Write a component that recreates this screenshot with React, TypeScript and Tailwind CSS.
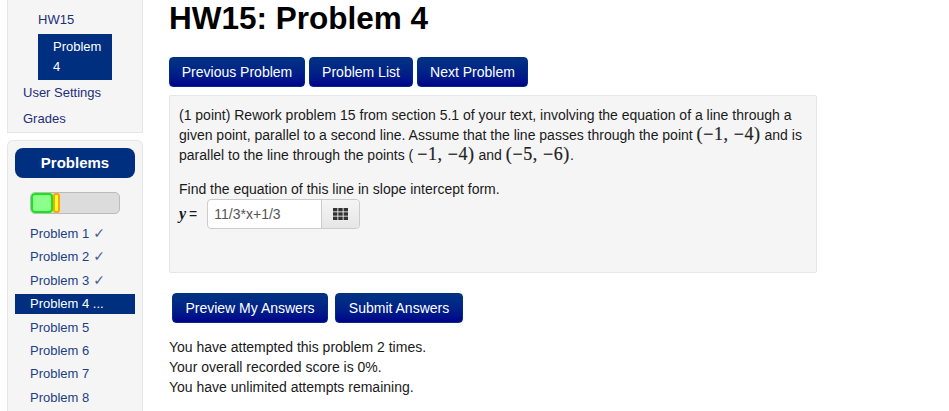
import React from "react";

const sans = "font-['Liberation_Sans',Arial,sans-serif]";

function NavButton({ width, children }: { width: string; children: React.ReactNode }) {
  return (
    <a className={`flex h-[30px] items-center justify-center rounded-[4px] border border-[#002f7f] bg-gradient-to-b from-[#003383] to-[#00008b] text-[14px] text-white ${width}`}>
      {children}
    </a>
  );
}

function Math({ children }: { children: React.ReactNode }) {
  return (
    <span className="font-['Liberation_Serif',serif] text-[18px] leading-[0] tracking-[0.6px] text-[#222] [-webkit-text-stroke:0.2px_#222]">
      {children}
    </span>
  );
}

const problems = [
  { label: "Problem 1", done: true },
  { label: "Problem 2", done: true },
  { label: "Problem 3", done: true },
  { label: "Problem 4 ...", active: true },
  { label: "Problem 5" },
  { label: "Problem 6" },
  { label: "Problem 7" },
  { label: "Problem 8" },
];

export default function App() {
  return (
    <div className={`flex h-[411px] w-[949px] overflow-hidden bg-white text-[14px] leading-[20px] text-[#1a1a1a] ${sans}`}>
      <aside className="ml-[7px] w-[136px] shrink-0">
        <div className="h-[133px] border-x border-b border-[#e6e6e6] bg-[#f5f5f5] pt-[10px] text-[#1c2f78]">
          <div className="pl-[30px] text-[13px] leading-[20px]">HW15</div>
          <div className="mt-[4px] ml-[30px] h-[46px] w-[74px] bg-[#002f7f] pl-[15px] pt-[3px] text-[13px] leading-[20px] text-white">
            Problem
            <br />4
          </div>
          <div className="pl-[15px] text-[13px] leading-[26px]">User Settings</div>
          <div className="pl-[15px] text-[13px] leading-[26px]">Grades</div>
        </div>

        <div className="mt-[7px] h-[300px] rounded-t-[6px] border-x border-t border-[#e6e6e6] bg-[#f5f5f5] px-[7px] pt-[7px]">
          <div className="flex h-[30px] items-center justify-center rounded-[8px] bg-[#002f7f] text-[15px] font-bold text-white">
            Problems
          </div>
          <div className="mx-[15px] mt-[14px] flex h-[22px] w-[90px] overflow-hidden rounded-[5px] border border-[#bbb] bg-[#dcdcdc]">
            <div className="w-[22px] rounded-[4px] border-2 border-[#19e619] bg-[#8cff8c]" />
            <div className="w-[7px] rounded-[3px] border-2 border-[#ffa500] bg-[#ffff33]" />
          </div>
          <ul className="mt-[10px]">
            {problems.map((p) => (
              <li
                key={p.label}
                className={
                  p.active
                    ? "mb-[3.4px] h-[20px] bg-[#002f7f] pl-[15px] text-[13px] leading-[20px] text-white"
                    : "mb-[3.4px] h-[20px] pl-[15px] text-[13px] leading-[20px] text-[#1c3f86]"
                }
              >
                {p.label}
                {p.done && <span className="ml-[4px] font-['DejaVu_Sans',sans-serif] text-[14px] leading-[0] text-[#4a5f8f]">✓</span>}
              </li>
            ))}
          </ul>
        </div>
      </aside>

      <main className="ml-[26px] w-[648px] shrink-0">
        <h1 className="text-[31.5px] font-bold leading-[36px] text-black">HW15: Problem 4</h1>

        <div className="mt-[21px] flex gap-[4px]">
          <NavButton width="w-[136px]">Previous Problem</NavButton>
          <NavButton width="w-[104px]">Problem List</NavButton>
          <NavButton width="w-[111px]">Next Problem</NavButton>
        </div>

        <div className="mt-[8px] h-[178px] rounded-[2px] border border-[#e6e6e6] bg-[#f5f5f5] px-[9px] pt-[9px]">
          <p className="leading-[20px]">
            (1 point) Rework problem 15 from section 5.1 of your text, involving the equation of a line through a
            <br />
            given point, parallel to a second line. Assume that the line passes through the point{" "}
            <Math>(−1, −4)</Math> and is
            <br />
            parallel to the line through the points ( <Math>−1, −4)</Math> and <Math>(−5, −6)</Math>.
          </p>
          <p className="mt-[14px] leading-[20px]">Find the equation of this line in slope intercept form.</p>
          <div className="flex items-center">
            <span className="font-['Liberation_Serif',serif] text-[16px] font-bold italic">y</span>
            <span className="ml-[3px]">=</span>
            <div className="ml-[10px] flex h-[30px] w-[153px] rounded-[4px] border border-[#cccccc] bg-white">
              <div className="flex w-[113px] items-center pl-[6px] text-[#555]">11/3*x+1/3</div>
              <div className="flex flex-1 items-center justify-center rounded-r-[4px] border-l border-[#cccccc] bg-gradient-to-b from-[#f5f5f5] to-[#e6e6e6]">
                <svg width="15" height="12" viewBox="0 0 15 12" fill="#333">
                  <rect x="0" y="0" width="4.4" height="3.4" />
                  <rect x="5.3" y="0" width="4.4" height="3.4" />
                  <rect x="10.6" y="0" width="4.4" height="3.4" />
                  <rect x="0" y="4.3" width="4.4" height="3.4" />
                  <rect x="5.3" y="4.3" width="4.4" height="3.4" />
                  <rect x="10.6" y="4.3" width="4.4" height="3.4" />
                  <rect x="0" y="8.6" width="4.4" height="3.4" />
                  <rect x="5.3" y="8.6" width="4.4" height="3.4" />
                  <rect x="10.6" y="8.6" width="4.4" height="3.4" />
                </svg>
              </div>
            </div>
          </div>
        </div>

        <div className="ml-[3px] mt-[20px] flex gap-[7px]">
          <NavButton width="w-[156px]">Preview My Answers</NavButton>
          <NavButton width="w-[128px]">Submit Answers</NavButton>
        </div>

        <div className="mt-[14px] leading-[20px]">
          <div>You have attempted this problem 2 times.</div>
          <div>Your overall recorded score is 0%.</div>
          <div>You have unlimited attempts remaining.</div>
        </div>
      </main>
    </div>
  );
}
